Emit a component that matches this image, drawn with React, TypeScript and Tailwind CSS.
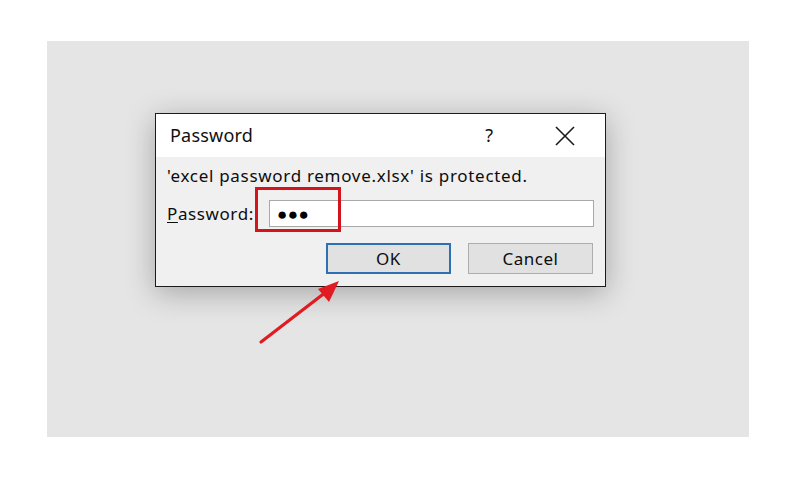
import React from 'react'

const font = { fontFamily: '"Noto Sans", "Open Sans", sans-serif' }

function CloseIcon() {
  return (
    <svg width="20" height="20" viewBox="0 0 20 20" className="text-[#1a1a1a]">
      <path d="M1 1 L19 19 M19 1 L1 19" stroke="currentColor" strokeWidth="1.6" fill="none" />
    </svg>
  )
}

function Arrow() {
  return (
    <svg className="absolute left-0 top-0 pointer-events-none" width="800" height="480" viewBox="0 0 800 480">
      <line x1="261" y1="342" x2="326" y2="292" stroke="#e01b22" strokeWidth="3.2" strokeLinecap="round" />
      <polygon points="339,281 318,289 329,302" fill="#e01b22" />
    </svg>
  )
}

export default function App() {
  return (
    <div className="relative w-[800px] h-[480px] bg-white overflow-hidden" style={font}>
      <div className="ml-[47px] mt-[41px] w-[702px] h-[396px] bg-[#e6e5e5] pl-[108px] pt-[72px]">
        <div className="w-[451px] h-[174px] border border-[#1b1b1b] bg-[#f0f0f0] shadow-[0_6px_28px_rgba(0,0,0,0.28)] flex flex-col">
          <div className="h-[43px] bg-white flex items-center pl-[14px] pr-[30px] shrink-0">
            <span className="text-[18px] text-[#111] tracking-[0.2px]">Password</span>
            <span className="ml-auto text-[18px] text-[#111] mr-[62px]">?</span>
            <CloseIcon />
          </div>
          <div className="flex flex-col pl-[11px] pr-[11px] pt-[6px]">
            <p className="text-[17px] leading-[25px] text-[#0d0d0d] tracking-[0.7px]">
              'excel password remove.xlsx' is protected.
            </p>
            <div className="mt-[12px] flex items-center">
              <span className="text-[17px] text-[#0d0d0d] tracking-[0.6px] w-[102px]">
                <span className="underline underline-offset-2">P</span>assword:
              </span>
              <div className="relative flex-1 h-[27px] bg-white border border-[#a8a8a8] flex items-center pl-[7px]">
                <span className="text-[17px] tracking-[0.5px] text-black leading-none">●●●</span>
                <div className="absolute left-[-15px] top-[-14px] w-[86px] h-[45px] border-[3.5px] border-[#d4141c]"></div>
              </div>
            </div>
            <div className="mt-[16px] flex justify-end gap-[17px] pr-[1px]">
              <button className="w-[125px] h-[31px] bg-[#e1e1e1] border-2 border-[#2f6fb3] text-[17px] tracking-[0.5px] text-[#0d0d0d]">
                OK
              </button>
              <button className="w-[125px] h-[31px] bg-[#e1e1e1] border border-[#adadad] text-[17px] tracking-[0.5px] text-[#0d0d0d]">
                Cancel
              </button>
            </div>
          </div>
        </div>
      </div>
      <Arrow />
    </div>
  )
}
